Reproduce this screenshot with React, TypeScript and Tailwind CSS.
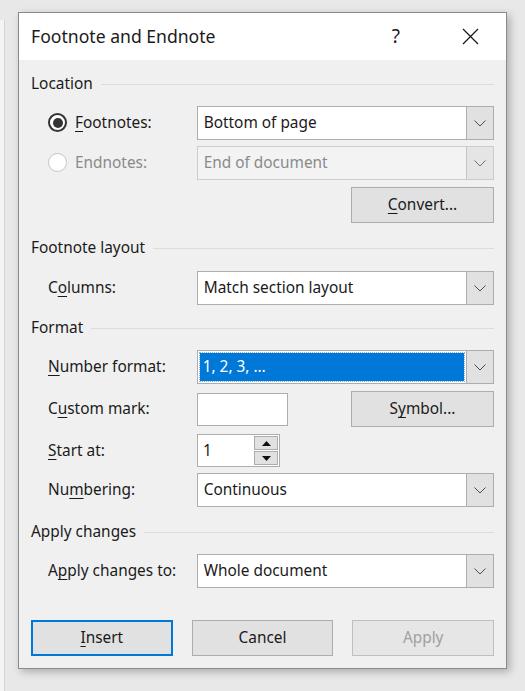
import type { ReactNode } from "react";

const FONT = "font-['Noto_Sans','Open_Sans','Liberation_Sans',sans-serif]";

function Chevron({ disabled }: { disabled?: boolean }) {
  return (
    <svg width="12" height="7" viewBox="0 0 12 7" className="block">
      <polyline
        points="0.5,0.5 6,6 11.5,0.5"
        fill="none"
        stroke={disabled ? "#6d6d6d" : "#4d4d4d"}
        strokeWidth="1"
      />
    </svg>
  );
}

function GroupHeader({ title }: { title: string }) {
  return (
    <div className="flex h-[20px] items-center gap-[8px] pr-[12px]">
      <span className="text-[15.4px] text-[#1a1a1a]">{title}</span>
      <div className="h-px flex-1 bg-[#dcdcdc]" />
    </div>
  );
}

function Select({
  value,
  disabled,
  highlighted,
}: {
  value: string;
  disabled?: boolean;
  highlighted?: boolean;
}) {
  return (
    <div
      className={`flex h-[34px] w-[298px] border ${
        disabled ? "border-[#cccccc] bg-[#f3f3f3]" : "border-[#adadad] bg-white"
      }`}
    >
      <div className="flex flex-1 items-center p-[2px]">
        {highlighted ? (
          <div className="flex h-full w-full items-center bg-[#0078d7] pl-[3px] text-[15.4px] text-white outline-1 outline-dotted outline-[#7fb3e6]">
            {value}
          </div>
        ) : (
          <span
            className={`pl-[4px] text-[15.4px] ${
              disabled ? "text-[#8a8a8a]" : "text-[#1a1a1a]"
            }`}
          >
            {value}
          </span>
        )}
      </div>
      <div
        className={`flex w-[27px] items-center justify-center border-l ${
          disabled ? "border-[#c4c4c4] bg-[#e5e5e5]" : "border-[#adadad] bg-[#e1e1e1]"
        }`}
      >
        <Chevron disabled={disabled} />
      </div>
    </div>
  );
}

function Row({ label, children }: { label: ReactNode; children: ReactNode }) {
  return (
    <div className="flex items-center pl-[17px] pr-[12px]">
      <div className="w-[149px] text-[15.4px] text-[#1a1a1a]">{label}</div>
      {children}
    </div>
  );
}

function Btn({
  children,
  className = "",
  disabled,
  focused,
}: {
  children: ReactNode;
  className?: string;
  disabled?: boolean;
  focused?: boolean;
}) {
  return (
    <button
      type="button"
      className={`flex h-[36px] w-[142px] items-center justify-center text-[15.4px] ${
        focused
          ? "border-2 border-[#0078d7] bg-[#e1e1e1] text-[#1a1a1a]"
          : disabled
          ? "border border-[#bfbfbf] bg-[#e6e6e6] text-[#a0a0a0]"
          : "border border-[#adadad] bg-[#e1e1e1] text-[#1a1a1a]"
      } ${className}`}
    >
      {children}
    </button>
  );
}

function Key({ children }: { children: ReactNode }) {
  return <u className="underline-offset-[3px]">{children}</u>;
}

export default function App() {
  return (
    <div className={`flex min-h-[691px] w-[525px] bg-[#e8e8e8] ${FONT}`}>
      {/* left edge of the window behind */}
      <div className="mt-[20px] w-[5px] border-r border-[#d6d6d6] bg-[#f4f4f4]" />

      <div className="ml-[13px] mt-[12px] flex h-[657px] w-[489px] flex-col border border-[#8a8a8a] bg-[#f0f0f0] shadow-[3px_3px_8px_rgba(0,0,0,0.25)]">
        {/* 타이틀 바 */}
        <div className="flex h-[47px] items-center bg-white pl-[12px]">
          <span className="text-[17.6px] text-[#1a1a1a]">Footnote and Endnote</span>
          <span className="ml-auto mr-[62px] text-[19px] text-[#1a1a1a]">?</span>
          <svg width="17" height="17" viewBox="0 0 17 17" className="mr-[27px]">
            <path d="M1 1 L16 16 M16 1 L1 16" stroke="#1a1a1a" strokeWidth="1.3" />
          </svg>
        </div>

        <div className="flex flex-col pl-[12px]">
          {/* Location */}
          <div className="mt-[14px]">
            <GroupHeader title="Location" />
          </div>
          <div className="mt-[12px] flex items-center pl-[17px] pr-[12px]">
            <div className="flex w-[149px] items-center">
              <div className="flex h-[19px] w-[19px] items-center justify-center rounded-full border-2 border-[#333333] bg-white">
                <div className="h-[10px] w-[10px] rounded-full bg-[#333333]" />
              </div>
              <span className="ml-[8px] text-[15.4px] text-[#1a1a1a]">
                <Key>F</Key>ootnotes:
              </span>
            </div>
            <Select value="Bottom of page" />
          </div>
          <div className="mt-[6px] flex items-center pl-[17px] pr-[12px]">
            <div className="flex w-[149px] items-center">
              <div className="h-[19px] w-[19px] rounded-full border border-[#c6c6c6] bg-white" />
              <span className="ml-[8px] text-[15.4px] text-[#8a8a8a]">Endnotes:</span>
            </div>
            <Select value="End of document" disabled />
          </div>
          <div className="mt-[7px] flex justify-end pr-[12px]">
            <Btn className="h-[35px] w-[143px]">
              <Key>C</Key>onvert...
            </Btn>
          </div>

          {/* Footnote layout */}
          <div className="mt-[15px]">
            <GroupHeader title="Footnote layout" />
          </div>
          <div className="mt-[13px]">
            <Row
              label={
                <>
                  C<Key>o</Key>lumns:
                </>
              }
            >
              <Select value="Match section layout" />
            </Row>
          </div>

          {/* Format */}
          <div className="mt-[13px]">
            <GroupHeader title="Format" />
          </div>
          <div className="mt-[12px]">
            <Row
              label={
                <>
                  <Key>N</Key>umber format:
                </>
              }
            >
              <Select value="1, 2, 3, …" highlighted />
            </Row>
          </div>
          <div className="mt-[7px]">
            <Row
              label={
                <>
                  C<Key>u</Key>stom mark:
                </>
              }
            >
              <div className="h-[33px] w-[91px] border border-[#adadad] bg-white" />
              <Btn className="ml-auto h-[35px] w-[143px]">
                S<Key>y</Key>mbol...
              </Btn>
            </Row>
          </div>
          <div className="mt-[7px]">
            <Row
              label={
                <>
                  <Key>S</Key>tart at:
                </>
              }
            >
              <div className="flex h-[33px] w-[83px] border border-[#adadad] bg-white">
                <span className="flex flex-1 items-center pl-[5px] text-[15.4px] text-[#1a1a1a]">
                  1
                </span>
                <div className="flex w-[25px] flex-col gap-px py-px pr-px">
                  <div className="flex flex-1 items-center justify-center border border-[#adadad] bg-[#e1e1e1]">
                    <svg width="9" height="5" viewBox="0 0 9 5">
                      <polygon points="0,5 4.5,0 9,5" fill="#111" />
                    </svg>
                  </div>
                  <div className="flex flex-1 items-center justify-center border border-[#adadad] bg-[#e1e1e1]">
                    <svg width="9" height="5" viewBox="0 0 9 5">
                      <polygon points="0,0 9,0 4.5,5" fill="#111" />
                    </svg>
                  </div>
                </div>
              </div>
            </Row>
          </div>
          <div className="mt-[6px]">
            <Row
              label={
                <>
                  Nu<Key>m</Key>bering:
                </>
              }
            >
              <Select value="Continuous" />
            </Row>
          </div>

          {/* Apply changes */}
          <div className="mt-[15px]">
            <GroupHeader title="Apply changes" />
          </div>
          <div className="mt-[12px]">
            <Row
              label={
                <>
                  A<Key>p</Key>ply changes to:
                </>
              }
            >
              <Select value="Whole document" />
            </Row>
          </div>

          {/* 버튼 */}
          <div className="mt-[32px] flex gap-[19px] pr-[12px]">
            <Btn focused className="w-[141px]">
              <Key>I</Key>nsert
            </Btn>
            <Btn className="w-[141px]">Cancel</Btn>
            <Btn disabled className="w-[142px]">
              Apply
            </Btn>
          </div>
        </div>
      </div>
    </div>
  );
}
